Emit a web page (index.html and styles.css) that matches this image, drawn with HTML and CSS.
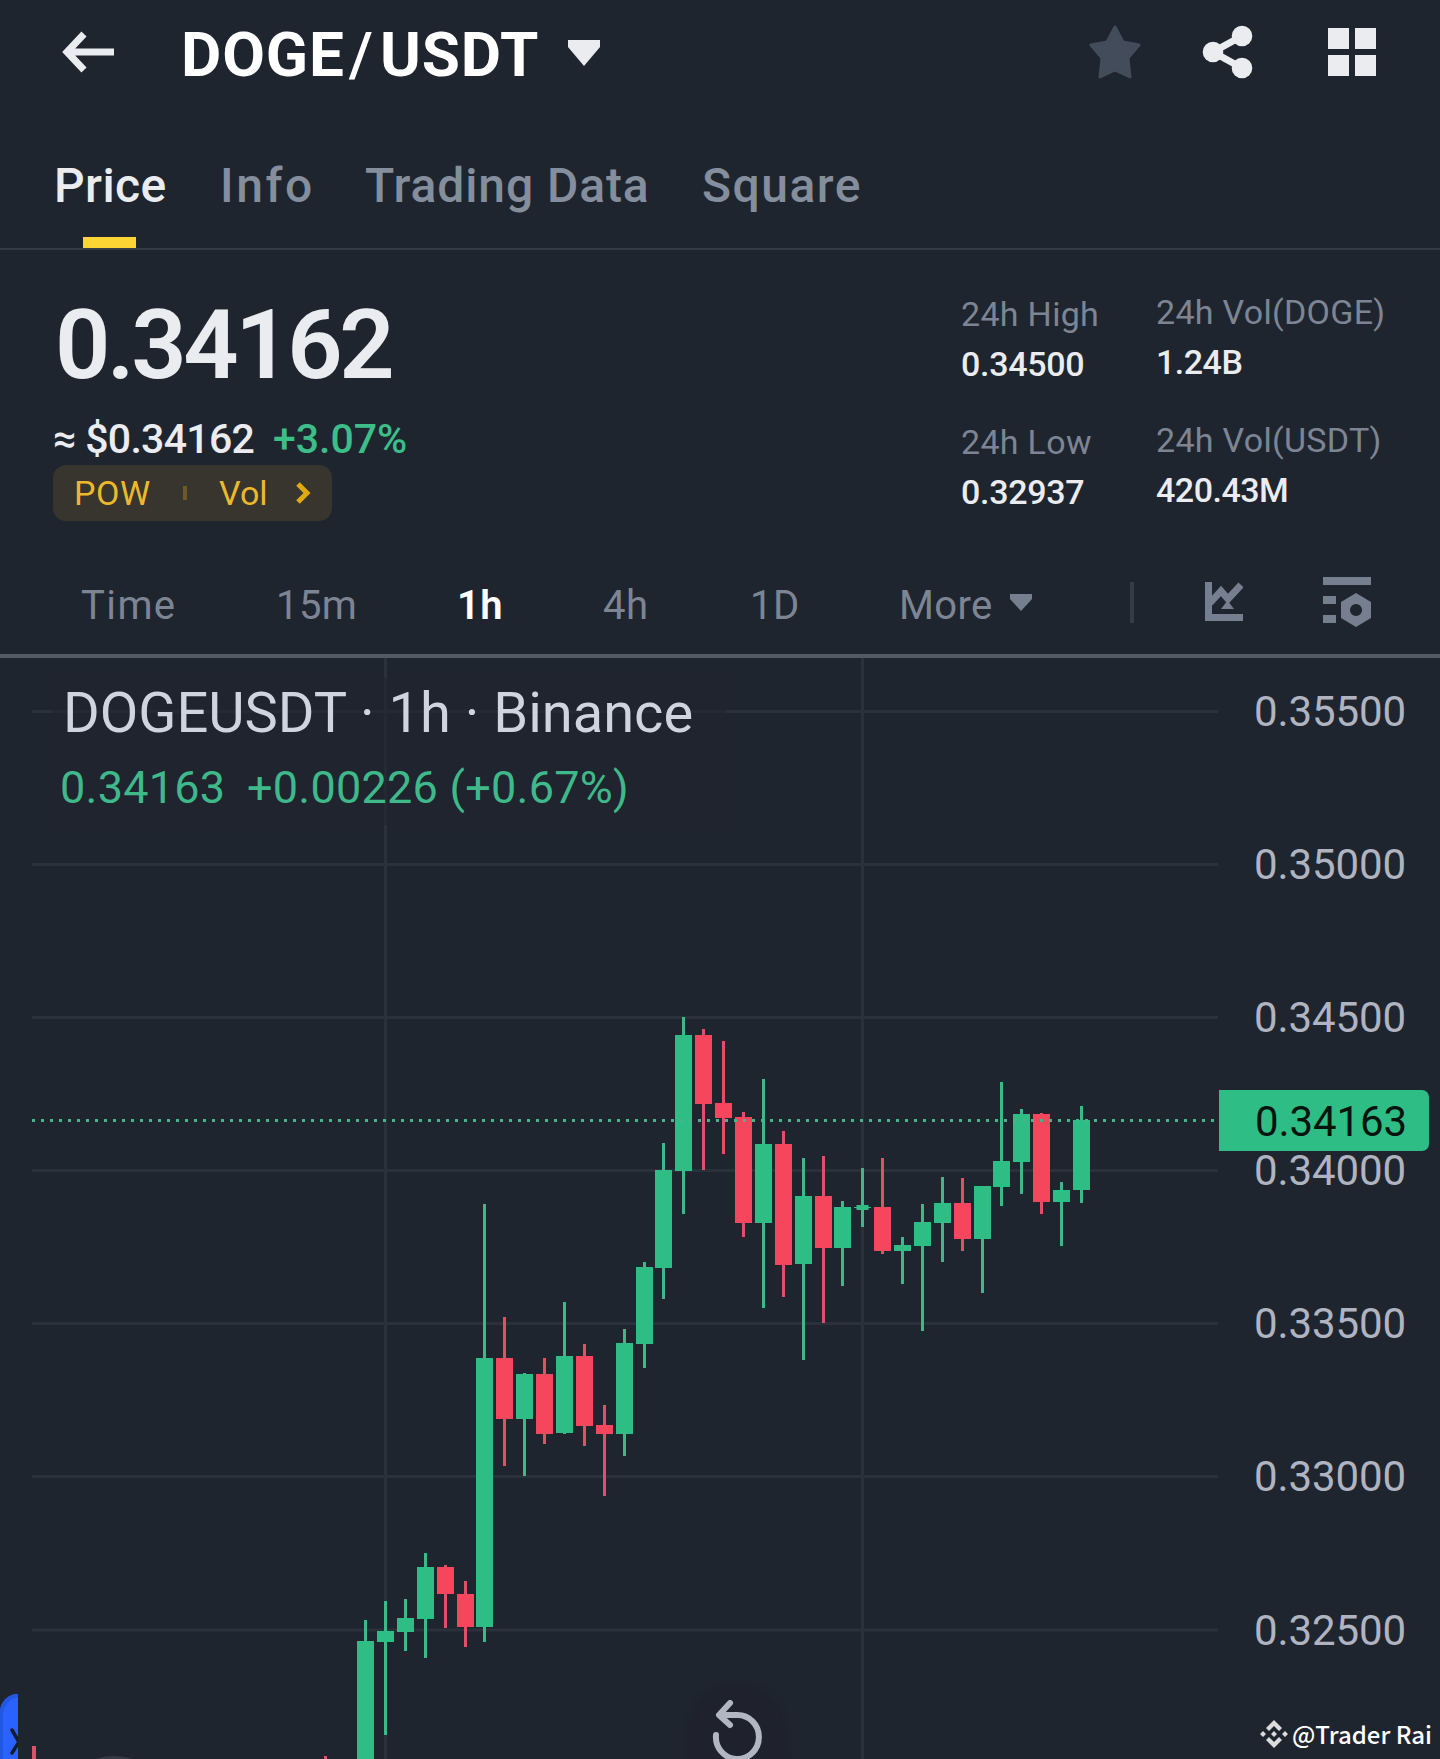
FILE: index.html
```html
<!DOCTYPE html>
<html lang="en">
<head>
    <meta charset="utf-8">
    <title>DOGE/USDT</title>
    <link rel="stylesheet" href="styles.css">
</head>
<body>

<header class="topbar">
    <svg class="back" width="52" height="42" viewBox="0 0 52 42"><path d="M22 3L5 21L22 39M4 21H52" fill="none" stroke="#eaecef" stroke-width="7"/></svg>
    <h1>DOGE<span class="slash">/</span>USDT</h1>
    <svg class="caret" width="34" height="26" viewBox="0 0 34 26"><path d="M1 0H33V7L17 26L1 7Z" fill="#eaecef"/></svg>
    <div class="actions">
        <svg width="52" height="54" viewBox="0 0 52 54"><path d="M26 2L34 17L50 20L39 33L41 52L26 45L11 52L13 33L2 20L18 17Z" fill="#434c5a" stroke="#434c5a" stroke-width="3" stroke-linejoin="round"/></svg>
        <svg width="52" height="54" viewBox="0 0 52 54">
            <path d="M40 11L11 27L40 43" fill="none" stroke="#eaecef" stroke-width="7"/>
            <g fill="#eaecef"><circle cx="40" cy="11" r="10.3"/><circle cx="11" cy="27" r="10.3"/><circle cx="40" cy="43" r="10.3"/></g>
        </svg>
        <svg width="48" height="48" viewBox="0 0 48 48"><path d="M0 0H21V21H0ZM27 0H48V21H27ZM0 27H21V48H0ZM27 27H48V48H27Z" fill="#eaecef"/></svg>
    </div>
</header>

<nav class="tabs">
    <a class="tab active price-tab">Price</a>
    <a class="tab info-tab">Info</a>
    <a class="tab data-tab">Trading Data</a>
    <a class="tab square-tab">Square</a>
</nav>

<section class="summary">
    <div class="quote">
        <div class="last">0.34162</div>
        <div class="approx"><span class="usd">≈ $0.34162</span><span class="change">+3.07%</span></div>
        <div class="tag">
            <span class="pow">POW</span><i></i><span class="vol">Vol</span>
            <svg width="16" height="22" viewBox="0 0 16 22"><path d="M3 2L12 11L3 20" fill="none" stroke="#e0ab12" stroke-width="5"/></svg>
        </div>
    </div>
    <div class="stats">
        <div class="label">24h High</div>
        <div class="value">0.34500</div>
        <div class="label">24h Low</div>
        <div class="value">0.32937</div>
    </div>
    <div class="stats volumes">
        <div class="label">24h Vol(DOGE)</div>
        <div class="value">1.24B</div>
        <div class="label">24h Vol(USDT)</div>
        <div class="value">420.43M</div>
    </div>
</section>

<nav class="intervals">
    <span>Time</span>
    <span>15m</span>
    <span class="selected">1h</span>
    <span>4h</span>
    <span>1D</span>
    <span>More</span>
    <svg width="22" height="17" viewBox="0 0 22 17"><path d="M0 0H22V5L11 17L0 5Z" fill="#767f90"/></svg>
    <i class="divider"></i>
    <svg width="38" height="40" viewBox="0 0 38 40">
        <path d="M3.5 0V35.5H38M5 21L16 9L23 17L36 3" fill="none" stroke="#767f90" stroke-width="7"/>
        <path d="M22.500 18.500L29 27H16Z" fill="#767f90"/>
    </svg>
    <svg width="48" height="50" viewBox="0 0 48 50">
        <path d="M0 0H48V8H0ZM0 19H13V27H0ZM0 38H13V46H0Z" fill="#767f90"/>
        <path fill-rule="evenodd" d="M33 16L48 25V41L33 50L18 41V25ZM33 27a6 6 0 1 0 .01 0Z" fill="#767f90"/>
    </svg>
</nav>

<main class="chart">
    <svg id="plot" width="1440" height="1101" viewBox="0 658 1440 1101"></svg>
    <div class="legend">
        <div class="symbol">DOGEUSDT · 1h · Binance</div>
        <div class="delta"><span class="delta-price">0.34163</span><span>+0.00226 (+0.67%)</span></div>
    </div>
    <div class="drawer">
        <svg width="18" height="65" viewBox="0 0 18 65"><path d="M12 36L19 48L12 59" fill="none" stroke="#141b2c" stroke-width="3.500" stroke-linecap="round"/></svg>
    </div>
    <div class="reset">
        <svg width="52" height="62" viewBox="0 0 52 62"><path d="M19 3L8 15L19 25M9 15H26A21.500 22 0 1 1 5 35" fill="none" stroke="#b2b5c2" stroke-width="6" stroke-linecap="round" stroke-linejoin="round"/></svg>
    </div>
    <div class="watermark">
        <svg width="28" height="28" viewBox="0 0 28 28" fill="#dcdcdc"><path d="M14 0L22 8L19 11L14 6L9 11L6 8ZM14 28L22 20L19 17L14 22L9 17L6 20ZM3 11L6 14L3 17L0 14ZM25 11L28 14L25 17L22 14ZM14 11L17 14L14 17L11 14Z"/></svg>
        <span>@Trader Rai</span>
    </div>
</main>

<script src="chart.js"></script>
</body>
</html>
```

FILE: styles.css
```css
body {
    margin: 0;
    width: 1440px;
    height: 1759px;
    overflow: hidden;
    background-color: #1f252f;
    color: #eaecef;
    font-family: Roboto, "Liberation Sans", sans-serif;
}
svg {
    display: block;
    flex: none;
}
.topbar {
    display: flex;
    align-items: center;
    box-sizing: border-box;
    height: 104px;
    padding: 0 64px 0 62px;
}
h1 {
    margin: 6px 0 0 67px;
    width: 358px;
    font-size: 62px;
    font-weight: 700;
    line-height: 70px;
    letter-spacing: 0.9px;
    color: #fff;
    white-space: nowrap;
}
.slash {
    margin: 0 6px 0 4px;
    font-weight: 500;
}
.caret {
    margin-left: 28px;
    margin-top: 2px;
}
.actions {
    display: flex;
    align-items: center;
    margin-left: auto;
}
.actions svg:nth-child(2) {
    margin: 0 74px 0 61px;
}
.tabs {
    display: flex;
    box-sizing: border-box;
    height: 146px;
    padding: 50px 0 0 54px;
    border-bottom: 2px solid #343b46;
    font-size: 48px;
    font-weight: 500;
    line-height: 64px;
    letter-spacing: 0.9px;
    color: #848e9c;
    white-space: nowrap;
}
.price-tab {
    width: 166px;
    letter-spacing: 0.4px;
}
.info-tab {
    width: 145px;
    letter-spacing: 2.6px;
}
.data-tab {
    width: 337px;
}
.square-tab {
    letter-spacing: 1.5px;
}
.active {
    position: relative;
    color: #eaecef;
}
.active::after {
    content: "";
    position: absolute;
    left: 29px;
    bottom: 0;
    width: 53px;
    height: 11px;
    background-color: #fcd535;
}
.summary {
    display: flex;
    height: 300px;
    padding-left: 53px;
}
.quote {
    width: 908px;
    padding-top: 42px;
}
.last {
    margin-left: 2px;
    font-size: 97px;
    font-weight: 600;
    line-height: 106px;
    letter-spacing: -3.4px;
}
.approx {
    display: flex;
    margin-top: 15px;
    margin-bottom: -1px;
    font-size: 41px;
    font-weight: 500;
    line-height: 53px;
}
.usd {
    width: 220px;
    letter-spacing: -0.7px;
}
.change {
    color: #3dbd88;
}
.tag {
    display: flex;
    align-items: center;
    box-sizing: border-box;
    width: 279px;
    height: 56px;
    padding-left: 21px;
    border-radius: 13px;
    background-color: #37352d;
    color: #ecb92c;
    font-size: 34px;
    line-height: 58px;
}
.pow {
    width: 109px;
    letter-spacing: 0.6px;
}
.tag i {
    width: 4px;
    height: 14px;
    margin-right: 32px;
    background-color: #6b5a28;
}
.vol {
    width: 76px;
}
.stats {
    width: 195px;
    padding-top: 39px;
    font-size: 34px;
    line-height: 50px;
    white-space: nowrap;
}
.label {
    height: 50px;
    color: #7d8594;
    letter-spacing: 0.3px;
}
.value {
    margin-bottom: 28px;
    font-weight: 500;
    letter-spacing: -0.3px;
}
.volumes {
    padding-top: 37px;
}
.volumes .value {
    letter-spacing: -0.5px;
}
.intervals {
    display: grid;
    grid-template-columns: 195px 181px 146px 147px 149px 111px 120px 75px 118px 48px;
    align-items: center;
    box-sizing: border-box;
    height: 108px;
    padding-left: 81px;
    border-bottom: 4px solid #535963;
    font-size: 40px;
    line-height: 50px;
    letter-spacing: 0.4px;
    color: #7d8594;
}
.intervals span {
    padding-top: 8px;
}
.intervals span:first-child {
    letter-spacing: 1.4px;
}
.selected {
    color: #fff;
    font-weight: 600;
}
.divider {
    width: 4px;
    height: 41px;
    background-color: #353c47;
}
.chart {
    position: relative;
    height: 1101px;
}
.axis {
    font-size: 42px;
    fill: #b0b4c0;
}
.axis-last {
    font-size: 42px;
    fill: #07130d;
}
.legend {
    position: absolute;
    left: 52px;
    top: 20px;
    box-sizing: border-box;
    width: 674px;
    height: 147px;
    padding: 0 8px;
    background-color: rgba(31, 37, 47, 0.6);
    white-space: nowrap;
}
.symbol {
    padding-left: 3px;
    font-size: 56px;
    line-height: 70px;
    color: #d1d4de;
}
.delta {
    display: flex;
    margin-top: 6px;
    font-size: 45px;
    line-height: 68px;
    letter-spacing: 0.25px;
    color: #3fb98a;
}
.delta-price {
    width: 187px;
}
.drawer {
    position: absolute;
    left: 0;
    top: 1036px;
    width: 18px;
    height: 65px;
    overflow: hidden;
    border-radius: 18px 0 0 0;
    background-color: #2962ff;
    box-shadow: inset 3px 3px 0 #2257e2;
}
.reset {
    position: absolute;
    left: 690px;
    top: 1028px;
    display: flex;
    justify-content: center;
    width: 94px;
    height: 73px;
    padding-top: 14px;
    box-sizing: border-box;
    border-radius: 47px 47px 0 0;
    background-color: #1f222d;
    box-shadow: 0 0 6px rgba(27, 31, 40, 0.7);
    overflow: hidden;
}
.watermark {
    position: absolute;
    left: 1260px;
    top: 1058px;
    display: flex;
    align-items: center;
    gap: 4px;
    font-family: "Noto Sans CJK SC", "Noto Sans", sans-serif;
    font-size: 24px;
    font-weight: 500;
    line-height: 36px;
    color: #fff;
    white-space: nowrap;
}
```

FILE: chart.js
```js
const GREEN = '#2ebd85';
const RED = '#f6465d';

// x, high, body top, body bottom, low, up
const candles = [
    [365.5, 1620, 1641, 1770, 1770, 1],
    [385.5, 1601, 1631, 1642, 1735, 1],
    [405.5, 1599, 1618, 1632, 1651, 1],
    [425.5, 1553, 1567, 1619, 1658, 1],
    [445.5, 1565, 1567, 1594, 1628, 0],
    [465.5, 1581, 1594, 1627, 1647, 0],
    [484.5, 1204, 1358, 1627, 1642, 1],
    [504.5, 1317, 1358, 1419, 1466, 0],
    [524.5, 1373, 1374, 1419, 1476, 1],
    [544.5, 1358, 1374, 1434, 1444, 0],
    [564.5, 1302, 1356, 1433, 1434, 1],
    [584.5, 1344, 1356, 1426, 1446, 0],
    [604.5, 1405, 1425, 1434, 1496, 0],
    [624.5, 1329, 1343, 1434, 1456, 1],
    [644.5, 1262, 1267, 1344, 1368, 1],
    [663.5, 1143, 1170, 1268, 1299, 1],
    [683.5, 1017, 1035, 1171, 1214, 1],
    [703.5, 1029, 1035, 1104, 1170, 0],
    [723.5, 1041, 1103, 1118, 1154, 0],
    [743.5, 1112, 1117, 1223, 1237, 0],
    [763.5, 1079, 1144, 1223, 1308, 1],
    [783.5, 1131, 1144, 1265, 1297, 0],
    [803.5, 1158, 1196, 1264, 1360, 1],
    [823.5, 1156, 1196, 1248, 1323, 0],
    [842.5, 1201, 1207, 1248, 1286, 1],
    [862.5, 1168, 1207, 1208, 1227, 1],
    [882.5, 1158, 1207, 1251, 1254, 0],
    [902.5, 1237, 1245, 1251, 1284, 1],
    [922.5, 1204, 1222, 1246, 1331, 1],
    [942.5, 1177, 1203, 1223, 1262, 1],
    [962.5, 1178, 1203, 1239, 1251, 0],
    [982.5, 1186, 1186, 1239, 1293, 1],
    [1001.5, 1082, 1161, 1187, 1206, 1],
    [1021.5, 1109, 1114, 1162, 1194, 1],
    [1041.5, 1113, 1114, 1202, 1214, 0],
    [1061.5, 1182, 1190, 1202, 1246, 1],
    [1081.5, 1106, 1120, 1190, 1203, 1]
];

const levels = [
    [711.5, '0.35500'], [864.5, '0.35000'], [1017.5, '0.34500'], [1170.5, '0.34000'],
    [1323.5, '0.33500'], [1476.5, '0.33000'], [1630, '0.32500']
];

let out = '';

levels.forEach(([y, label]) => {
    out += `<path d="M32 ${y}H1218" stroke="#2b313b" stroke-width="3"/>`;
    out += `<text class="axis" x="1254" y="${y + 14.5}" textLength="152">${label}</text>`;
});
[385.5, 862.5].forEach(x => {
    out += `<path d="M${x} 658V1759" stroke="#2b313b" stroke-width="3"/>`;
});

candles.forEach(([x, high, top, bottom, low, up]) => {
    out += `<rect x="${x - 1.5}" y="${high}" width="3" height="${low - high}" fill="${up ? '#3eb888' : '#e24f66'}"/>`;
    out += `<rect x="${x - 8.5}" y="${top}" width="17" height="${bottom - top}" fill="${up ? GREEN : RED}"/>`;
});
// thicker centre of the doji
out += `<rect x="856.500" y="1205" width="12" height="5" fill="${GREEN}"/>`;

// tops of candles that start below the visible range
out += '<path d="M32 1746h4v13h-4zM324 1756h3v3h-3z" fill="#dc5369"/>';
out += '<path d="M95 1759Q114 1753 133 1759Z" fill="#363a45"/>';

// last price
out += '<path d="M32 1120.5H1218" stroke="#46b68a" stroke-width="3" stroke-dasharray="3 6"/>';
out += `<path d="M1219 1090H1422a7 7 0 0 1 7 7V1144a7 7 0 0 1-7 7H1219Z" fill="${GREEN}"/>`;
out += '<text class="axis-last" x="1255" y="1136" textLength="152">0.34163</text>';

document.getElementById('plot').innerHTML = out;
```
